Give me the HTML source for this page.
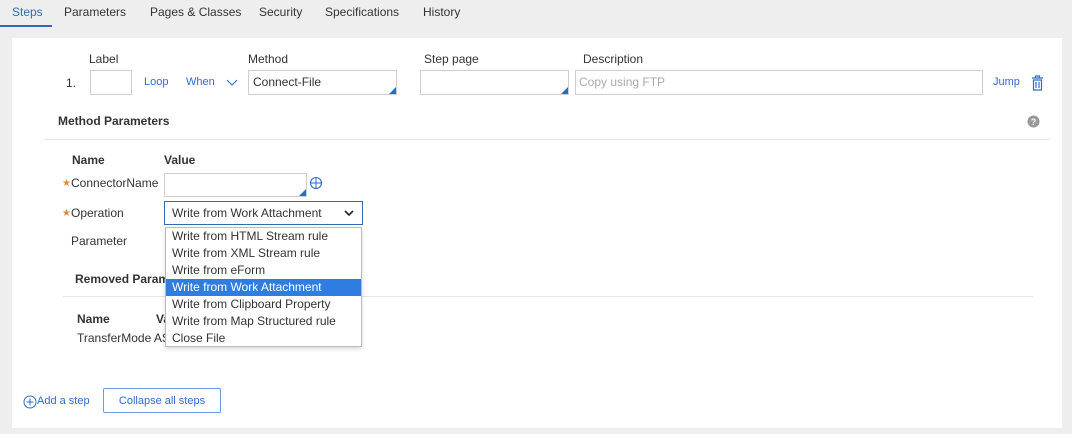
<!DOCTYPE html>
<html><head><style>
body{margin:0;width:1072px;height:434px;background:#eeeeee;font-family:"Liberation Sans",sans-serif;font-size:12px;color:#333;position:relative;overflow:hidden}
.a{position:absolute;white-space:nowrap}
.box{position:absolute;background:#fff;border:1px solid #cfcfcf;box-sizing:border-box}
.tri{position:absolute;right:0;bottom:0;width:0;height:0;border-left:7px solid transparent;border-bottom:7px solid #1f6fd0}
.lnk{color:#2f6bd0}
b{font-weight:bold}
.dd div{height:17px;line-height:17px;padding-left:6px;color:#333}
</style></head><body>
<div class="a" style="left:12px;top:5px">
<span class="a" style="left:0;color:#2f6bb3">Steps</span>
<span class="a" style="left:52px">Parameters</span>
<span class="a" style="left:138px">Pages &amp; Classes</span>
<span class="a" style="left:247px">Security</span>
<span class="a" style="left:313px">Specifications</span>
<span class="a" style="left:411px">History</span>
</div>
<div class="a" style="left:0;top:25px;width:52px;height:2px;background:#2f6bb3"></div>
<div class="a" style="left:12px;top:38px;width:1050px;height:390px;background:#fff"></div>

<span class="a" style="left:89px;top:52px">Label</span>
<span class="a" style="left:248px;top:52px">Method</span>
<span class="a" style="left:424px;top:52px">Step page</span>
<span class="a" style="left:583px;top:52px">Description</span>
<span class="a" style="left:66px;top:76px">1.</span>
<div class="box" style="left:90px;top:70px;width:42px;height:25px"></div>
<span class="a lnk" style="left:144px;top:76px;font-size:11px">Loop</span>
<span class="a lnk" style="left:186px;top:76px;font-size:11px">When</span>
<svg class="a" style="left:226px;top:79px" width="12" height="8"><path d="M1 1l5 5 5-5" fill="none" stroke="#2f6bd0" stroke-width="1"/></svg>
<div class="box" style="left:248px;top:70px;width:149px;height:25px;padding:4px 4px"><span>Connect-File</span><div class="tri"></div></div>
<div class="box" style="left:420px;top:70px;width:149px;height:25px"><div class="tri"></div></div>
<div class="box" style="left:575px;top:70px;width:408px;height:25px;padding:4px 3px;color:#aaa">Copy using FTP</div>
<span class="a lnk" style="left:993px;top:76px;font-size:11px">Jump</span>
<svg class="a" style="left:1031px;top:75px" width="13" height="16" viewBox="0 0 13 16"><path d="M1 3h11M4.5 3V1h4v2M2.5 5h8v10h-8z M5 7v6M8 7v6" fill="none" stroke="#2f6bd0" stroke-width="1.2"/></svg>

<b class="a" style="left:58px;top:114px">Method Parameters</b>
<svg class="a" style="left:1027px;top:115px" width="13" height="13"><circle cx="6.5" cy="6.5" r="6" fill="#999"/><text x="6.5" y="10" font-size="9" font-weight="bold" text-anchor="middle" fill="#fff" font-family="Liberation Sans">?</text></svg>
<div class="a" style="left:45px;top:139px;width:1005px;height:1px;background:#e5e5e5"></div>

<b class="a" style="left:72px;top:153px">Name</b>
<b class="a" style="left:164px;top:153px">Value</b>
<span class="a" style="left:62px;top:178px;color:#e08a3c;font-size:10px">★</span>
<span class="a" style="left:71px;top:176px">ConnectorName</span>
<div class="box" style="left:164px;top:173px;width:143px;height:24px"><div class="tri"></div></div>
<svg class="a" style="left:309px;top:176px" width="14" height="14"><circle cx="7" cy="7" r="5.5" fill="none" stroke="#2f6bd0" stroke-width="1.1"/><path d="M7 1.5v11M1.5 7h11" stroke="#2f6bd0" stroke-width="1"/></svg>
<span class="a" style="left:62px;top:208px;color:#e08a3c;font-size:10px">★</span>
<span class="a" style="left:71px;top:206px">Operation</span>
<div class="box" style="left:164px;top:201px;width:199px;height:24px;border-color:#2f6bb3;padding:4px 7px">Write from Work Attachment</div>
<svg class="a" style="left:344px;top:210px" width="10" height="7"><path d="M1 1l4 4 4-4" fill="none" stroke="#222" stroke-width="1.6"/></svg>
<span class="a" style="left:71px;top:234px">Parameter</span>

<b class="a" style="left:75px;top:272px">Removed Param</b>
<div class="a" style="left:63px;top:296px;width:970px;height:1px;background:#e5e5e5"></div>
<b class="a" style="left:77px;top:312px">Name</b>
<b class="a" style="left:156px;top:312px">Va</b>
<span class="a" style="left:77px;top:331px">TransferMode AS</span>

<div class="a dd" style="left:165px;top:227px;width:197px;height:120px;background:#fff;border:1px solid #bbb;box-sizing:border-box;box-shadow:0 2px 4px rgba(0,0,0,.15)">
<div>Write from HTML Stream rule</div>
<div>Write from XML Stream rule</div>
<div>Write from eForm</div>
<div style="background:#2f7de1;color:#fff">Write from Work Attachment</div>
<div>Write from Clipboard Property</div>
<div>Write from Map Structured rule</div>
<div>Close File</div>
</div>

<svg class="a" style="left:23px;top:395px" width="14" height="14"><circle cx="7" cy="7" r="6" fill="none" stroke="#2f6bd0" stroke-width="1"/><path d="M7 3.5v7M3.5 7h7" stroke="#2f6bd0" stroke-width="1"/></svg>
<span class="a lnk" style="left:37px;top:395px;font-size:11px">Add a step</span>
<div class="a" style="left:103px;top:388px;width:118px;height:25px;border:1px solid #6b9bd8;box-sizing:border-box;text-align:center;line-height:25px;color:#2f6bd0;font-size:11px;border-radius:2px">Collapse all steps</div>
</body></html>
